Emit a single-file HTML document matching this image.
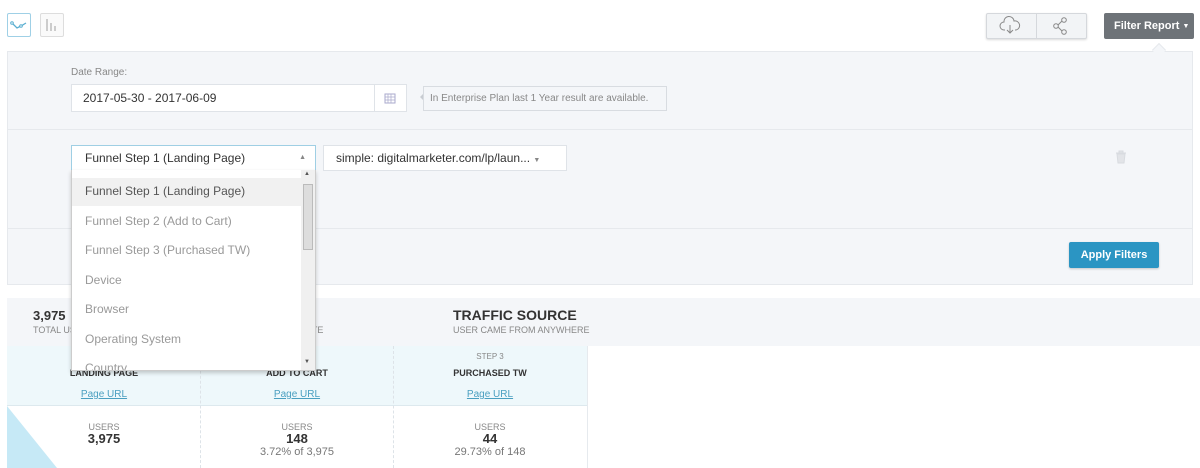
<!DOCTYPE html>
<html><head><style>
*{box-sizing:border-box;margin:0;padding:0}
body{width:1200px;height:468px;overflow:hidden;background:#fff;font-family:"Liberation Sans",sans-serif;position:relative;color:#333}
.a{position:absolute}
.ibtn{position:absolute;width:24px;height:24px;border:1px solid #ddd;border-radius:2px;background:#fafafa}
.lnk{color:#4a9fc0;text-decoration:underline;font-size:10px}
.sm{font-size:9px;color:#888}
</style></head><body>
<div class="ibtn" style="left:7px;top:13px;border-color:#9fd0e6;background:#fff"><svg width="22" height="22" viewBox="0 0 22 22"><path d="M4 9 L9 14 L13 12 L18 9" fill="none" stroke="#5aaed0" stroke-width="1.3"/><circle cx="4" cy="9" r="1.3" fill="#fff" stroke="#5aaed0"/><circle cx="13" cy="12" r="1.3" fill="#fff" stroke="#5aaed0"/></svg></div>
<div class="ibtn" style="left:40px;top:13px"><svg width="22" height="22"><rect x="5" y="5" width="2" height="12" fill="#ccc"/><rect x="9" y="9" width="2" height="8" fill="#ccc"/><rect x="13" y="12" width="2" height="5" fill="#ccc"/></svg></div>
<div class="a" style="left:986px;top:13px;width:101px;height:26px;border:1px solid #d5d8dc;background:#f2f4f6;border-radius:2px;box-shadow:0 1px 2px rgba(0,0,0,.15)"></div>
<div class="a" style="left:1036px;top:13px;width:1px;height:26px;background:#d5d8dc"></div>
<svg class="a" style="left:998px;top:15px" width="24" height="22"><path d="M7 15 H6 a4 4 0 0 1 0-8 a5 5 0 0 1 10-1 a4 4 0 0 1 2 9 h-1" fill="none" stroke="#888" stroke-width="1"/><path d="M12 10 v8 M9 15 l3 3 l3-3" fill="none" stroke="#888"/></svg>
<svg class="a" style="left:1050px;top:15px" width="22" height="22"><circle cx="6" cy="11" r="2.3" fill="none" stroke="#888"/><circle cx="14" cy="5" r="2.3" fill="none" stroke="#888"/><circle cx="14" cy="17" r="2.3" fill="none" stroke="#888"/><path d="M8 10 L12 6 M8 12 L12 16" stroke="#888"/></svg>
<div class="a" style="left:1104px;top:13px;width:90px;height:26px;background:#6e7378;border-radius:2px;color:#fff;font-size:11px;font-weight:bold;line-height:26px;padding-left:10px">Filter Report <span style="font-size:7px;position:relative;top:-1px">▼</span></div>
<div class="a" style="left:7px;top:51px;width:1186px;height:234px;background:#f4f6f9;border:1px solid #e6e9ed"></div>
<div class="a" style="left:1154px;top:45px;width:10px;height:10px;background:#f4f6f9;border-left:1px solid #e6e9ed;border-top:1px solid #e6e9ed;transform:rotate(45deg)"></div>
<div class="a" style="left:71px;top:67px;font-size:10px;color:#888">Date Range:</div>
<div class="a" style="left:71px;top:84px;width:336px;height:28px;background:#fff;border:1px solid #dfe3e8;font-size:12px;line-height:26px;padding-left:11px">2017-05-30 - 2017-06-09</div>
<div class="a" style="left:374px;top:85px;width:1px;height:26px;background:#dfe3e8"></div>
<svg class="a" style="left:384px;top:92px" width="12" height="12"><rect x="1" y="2" width="10" height="9" fill="none" stroke="#aac"/><path d="M1 5h10M1 8h10M4 2v9M7 2v9" stroke="#aac" stroke-width=".7"/></svg>
<div class="a" style="left:416px;top:93px;border:4px solid transparent;border-right-color:#c8ccd2"></div>
<div class="a" style="left:423px;top:86px;width:244px;height:25px;border:1px solid #d8dce1;font-size:10px;color:#888;line-height:23px;padding-left:6px">In Enterprise Plan last 1 Year result are available.</div>
<div class="a" style="left:8px;top:129px;width:1184px;height:1px;background:#e6e9ed"></div>
<div class="a" style="left:8px;top:228px;width:1184px;height:1px;background:#e6e9ed"></div>
<div class="a" style="left:323px;top:145px;width:244px;height:26px;background:#fff;border:1px solid #dfe3e8;font-size:12px;line-height:24px;padding-left:12px">simple: digitalmarketer.com/lp/laun... <span style="font-size:7px;color:#888">▼</span></div>
<svg class="a" style="left:1115px;top:150px" width="12" height="14"><path d="M1 3h10M4 3V1h4v2M2 4h8l-1 9H3z" fill="#e2e4e8" stroke="#d8dbe0"/></svg>
<div class="a" style="left:1069px;top:242px;width:90px;height:26px;background:#2b95c3;border-radius:2px;color:#fff;font-weight:bold;font-size:11px;text-align:center;line-height:26px;box-shadow:0 1px 2px rgba(0,0,0,.2)">Apply Filters</div>
<div class="a" style="left:7px;top:298px;width:1193px;height:48px;background:#f4f6f9"></div>
<div class="a" style="left:33px;top:308px;font-size:13px;font-weight:bold">3,975</div>
<div class="a sm" style="left:33px;top:325px">TOTAL USERS</div>
<div class="a sm" style="left:300px;top:325px">RATE</div>
<div class="a" style="left:453px;top:307px;font-size:14px;font-weight:bold">TRAFFIC SOURCE</div>
<div class="a sm" style="left:453px;top:325px">USER CAME FROM ANYWHERE</div>
<div class="a" style="left:7px;top:346px;width:581px;height:59px;background:#eef8fb"></div>
<div class="a" style="left:7px;top:405px;width:581px;height:1px;background:#dde9ee"></div>
<div class="a" style="left:200px;top:346px;height:122px;border-left:1px dashed #dde3e8"></div>
<div class="a" style="left:393px;top:346px;height:122px;border-left:1px dashed #dde3e8"></div>
<div class="a" style="left:587px;top:346px;height:122px;border-left:1px solid #e6eaee"></div>
<svg class="a" style="left:7px;top:406px" width="50" height="62"><path d="M0 0 L50 62 L0 62z" fill="#c6e9f6"/></svg>
<div class="a" style="left:7px;top:368px;width:194px;text-align:center;font-size:9px;font-weight:bold">LANDING PAGE</div>
<div class="a" style="left:7px;top:384px;width:194px;text-align:center"><span class="lnk">Page URL</span></div>
<div class="a" style="left:200px;top:368px;width:194px;text-align:center;font-size:9px;font-weight:bold">ADD TO CART</div>
<div class="a" style="left:200px;top:384px;width:194px;text-align:center"><span class="lnk">Page URL</span></div>
<div class="a sm" style="left:393px;top:352px;width:194px;text-align:center;font-size:8px">STEP 3</div>
<div class="a" style="left:393px;top:368px;width:194px;text-align:center;font-size:9px;font-weight:bold">PURCHASED TW</div>
<div class="a" style="left:393px;top:384px;width:194px;text-align:center"><span class="lnk">Page URL</span></div>
<div class="a" style="left:7px;top:422px;width:194px;text-align:center"><div class="sm">USERS</div><div style="font-size:13px;font-weight:bold;margin-top:-1px">3,975</div></div>
<div class="a" style="left:200px;top:422px;width:194px;text-align:center"><div class="sm">USERS</div><div style="font-size:13px;font-weight:bold;margin-top:-1px">148</div><div style="font-size:11px;color:#777">3.72% of 3,975</div></div>
<div class="a" style="left:393px;top:422px;width:194px;text-align:center"><div class="sm">USERS</div><div style="font-size:13px;font-weight:bold;margin-top:-1px">44</div><div style="font-size:11px;color:#777">29.73% of 148</div></div>
<div class="a" style="left:71px;top:145px;width:245px;height:26px;background:#fff;border:1px solid #9fcfe4;font-size:12px;line-height:24px;padding-left:13px">Funnel Step 1 (Landing Page)<span style="position:absolute;right:9px;font-size:7px;color:#888">▲</span></div>
<div class="a" style="left:71px;top:170px;width:245px;height:201px;background:#fff;border:1px solid #ccc;border-top:none;box-shadow:0 2px 4px rgba(0,0,0,.2);overflow:hidden;font-size:12px;color:#999">
<div style="position:absolute;left:0;top:8px;width:229px;height:28px;background:#f1f1f1"></div>
<div style="position:absolute;left:13px;top:14px;color:#555">Funnel Step 1 (Landing Page)</div>
<div style="position:absolute;left:13px;top:44px">Funnel Step 2 (Add to Cart)</div>
<div style="position:absolute;left:13px;top:73px">Funnel Step 3 (Purchased TW)</div>
<div style="position:absolute;left:13px;top:103px">Device</div>
<div style="position:absolute;left:13px;top:132px">Browser</div>
<div style="position:absolute;left:13px;top:162px">Operating System</div>
<div style="position:absolute;left:13px;top:191px">Country</div>
<div style="position:absolute;left:229px;top:0;width:15px;height:201px;background:#f0f0f0"></div>
<div style="position:absolute;left:231px;top:14px;width:10px;height:66px;background:#ddd;border:1px solid #bbb"></div>
<div style="position:absolute;left:232px;top:1px;font-size:6px;color:#555">▲</div>
<div style="position:absolute;left:232px;top:189px;font-size:6px;color:#555">▼</div>
</div>
</body></html>
